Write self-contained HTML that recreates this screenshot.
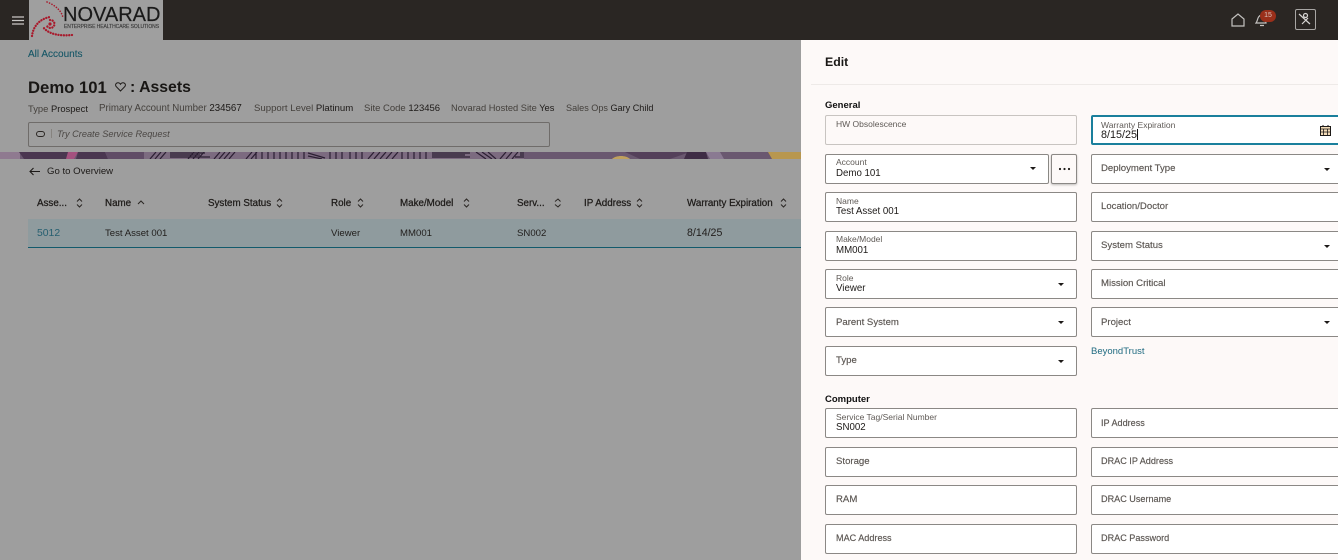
<!DOCTYPE html>
<html><head><meta charset="utf-8"><title>Assets</title>
<style>
*{box-sizing:border-box}
html,body{margin:0;padding:0}
body{width:1338px;height:560px;overflow:hidden;position:relative;background:#9e9e9e;font-family:"Liberation Sans",sans-serif;color:#1d1a18}
.a{position:absolute;white-space:nowrap}
.t{font-size:10px;line-height:12px}
.g{color:#44403c}
.th{font-size:9.8px;color:#1e1b19;top:198px;line-height:12px;-webkit-text-stroke:.25px #1e1b19}
.td{font-size:9.6px;color:#211e1c;top:228px;line-height:12px}
.f{position:absolute;height:30px;background:#fff;border:1px solid #8b8885;border-radius:2px;overflow:hidden}
.f .l{position:absolute;left:10px;top:3px;font-size:8.5px;line-height:10px;color:#5f5a56;white-space:nowrap}
.f .v{position:absolute;left:10px;top:13px;font-size:9.7px;line-height:11px;color:#1d1a18;white-space:nowrap}
.f .p{position:absolute;left:10px;top:8px;font-size:9.6px;line-height:12px;color:#5a5551;white-space:nowrap;-webkit-text-stroke:.15px #5a5551}
.R .p{left:9px}
.f .n{font-size:9.1px;top:7px}
.f .c{position:absolute;top:13px;width:0;height:0;border-left:3px solid transparent;border-right:3px solid transparent;border-top:3px solid #1d1a18}
.L{left:825px;width:252px}
.R{left:1091px;width:260px}
</style></head><body>
<div class="a" style="left:0;top:0;width:1338px;height:40px;background:#2a2623"></div>
<svg class="a" style="left:12px;top:16px" width="12" height="9"><path d="M0 1H12M0 4.5H12M0 8H12" stroke="#c9c7c5" stroke-width="1.2"/></svg>
<div class="a" style="left:29px;top:0;width:134px;height:40px;background:#9f9f9f;overflow:hidden">
<svg width="46" height="40" style="position:absolute;left:0;top:0"><g fill="none" stroke="#a81a2c" stroke-linecap="round" stroke-dasharray=".1 2.6"><path stroke-width="1.6" d="M18 2C26 5 33 11 34 18"/><path stroke-width="2.3" d="M3 36C4 27 10 19 21 17"/><path stroke-width="2.3" d="M43 35C32 36 20 35 14 27"/><path stroke-width="2.3" d="M21 20a4 4 0 1 1 -3 6"/></g><circle cx="21" cy="24" r="1.6" fill="#a81a2c"/></svg>
<div class="a" style="left:34px;top:4px;font-size:20px;line-height:22px;color:#1a1a1a;-webkit-text-stroke:.2px #1a1a1a">NOVARAD</div>
<div class="a" style="left:35px;top:24px;font-size:5px;line-height:6px;color:#333;letter-spacing:-.06px;-webkit-text-stroke:.15px #444">ENTERPRISE HEALTHCARE SOLUTIONS</div>
</div>
<div class="a t" style="left:28px;top:48px;color:#155666;font-size:10px;line-height:13px;-webkit-text-stroke:.1px #155666">All Accounts</div>
<div class="a" style="left:28px;top:78px;font-size:16.7px;line-height:20px;font-weight:700;color:#191715">Demo 101</div>
<svg class="a" style="left:115px;top:82px" width="11" height="10" viewBox="0 0 11 10"><path d="M5.5 9L1.2 4.6C-.2 2.6 1.2.7 3 .7 4.2.7 5 1.3 5.5 2.2 6 1.3 6.8.7 8 .7c1.8 0 3.2 1.9 1.8 3.9Z" fill="none" stroke="#1f1c1a"/></svg>
<div class="a" style="left:130px;top:78px;font-size:15.8px;line-height:20px;font-weight:700;color:#191715">: Assets</div>
<div class="a t g" style="left:28px;top:102px;font-size:9.4px;line-height:13px">Type <span style="color:#1d1a18">Prospect</span></div>
<div class="a t g" style="left:99px;top:102px;font-size:9.7px;line-height:13px">Primary Account Number <span style="color:#1d1a18">234567</span></div>
<div class="a t g" style="left:254px;top:102px;font-size:9.6px;line-height:13px">Support Level <span style="color:#1d1a18">Platinum</span></div>
<div class="a t g" style="left:364px;top:102px;font-size:9.5px;line-height:13px">Site Code <span style="color:#1d1a18">123456</span></div>
<div class="a t g" style="left:451px;top:102px;font-size:9.3px;line-height:13px">Novarad Hosted Site <span style="color:#1d1a18">Yes</span></div>
<div class="a t g" style="left:566px;top:102px;font-size:9.1px;line-height:13px">Sales Ops <span style="color:#1d1a18">Gary Child</span></div>
<div class="a" style="left:28px;top:122px;width:522px;height:25px;border:1px solid #6f6c6a;border-radius:2px"></div>
<div class="a" style="left:36px;top:131px;width:9px;height:6px;border:1.3px solid #2a2623;border-radius:3px"></div>
<div class="a" style="left:51px;top:129px;width:1px;height:9px;background:#86837f"></div>
<div class="a" style="left:57px;top:128px;font-size:9.2px;line-height:13px;font-style:italic;color:#4b4744">Try Create Service Request</div>
<svg class="a" style="left:0;top:152px" width="801" height="7" viewBox="0 0 801 7">
<rect width="801" height="7" fill="#6a5870"/>
<rect width="20" height="7" fill="#8f7a90"/>
<path d="M19 0H68L74 7H24Z" fill="#4a3650"/><path d="M68 0H78L74 7H66Z" fill="#a4517f"/><path d="M78 0H105L108 7H76Z" fill="#4a3650"/>
<path d="M105 0H144V7H108Z" fill="#604c66"/>
<rect x="144" width="200" height="7" fill="#7c6b80"/>
<path d="M150 7L156 0M155 7L161 0M160 7L166 0M170 1H205M170 3H200M170 5H210M188 7L194 0M193 7L199 0M198 7L204 0M214 7L220 0M219 7L225 0M224 7L230 0M229 7L235 0M246 7L252 0M251 7L257 0M256 7V0M262 7V0M268 7V0M274 7V0M280 7V0M286 7V0M292 7V0M298 7V0M304 7V0M308 1L325 6M308 4L322 7M330 7V0M336 7V0M342 7V0" stroke="#2b1f32" stroke-width="1.2" fill="none"/>
<rect x="344" width="180" height="7" fill="#7c6b80"/>
<path d="M350 7V0M356 7V0M362 7V0M368 7L374 0M374 7L380 0M380 7L386 0M386 7L392 0M392 7L398 0M402 7V0M408 7V0M414 7V0M420 7V0M426 7V0M432 1H470M432 3H465M432 5H470M476 0L486 7M482 0L492 7M488 0L496 7M500 7L506 0M506 7L512 0M512 7L518 0M520 1H524M520 3H524M515 5H524" stroke="#2b1f32" stroke-width="1.2" fill="none"/>
<path d="M625 0H690L670 7H640Z" fill="#54405a"/>
<path d="M612 7C616 3 626 3 630 7Z" fill="#c0a15d"/>
<path d="M687 0H706L708 7H684Z" fill="#3e2c45"/>
<path d="M706 0H720L724 7H710Z" fill="#8a7a92"/>
<path d="M768 0H801V7H772Z" fill="#b8974f"/>
</svg>
<svg class="a" style="left:29px;top:167px" width="12" height="9"><path d="M11 4.5H1M4.5 1L1 4.5L4.5 8" fill="none" stroke="#1d1a18" stroke-width="1.1"/></svg>
<div class="a t" style="left:47px;top:165px;font-size:9.6px;line-height:13px;color:#1d1a18">Go to Overview</div>

<div class="a th" style="left:37px">Asse...</div>
<div class="a th" style="left:105px">Name</div>
<div class="a th" style="left:208px">System Status</div>
<div class="a th" style="left:331px">Role</div>
<div class="a th" style="left:400px">Make/Model</div>
<div class="a th" style="left:517px">Serv...</div>
<div class="a th" style="left:584px">IP Address</div>
<div class="a th" style="left:687px">Warranty Expiration</div>
<svg class="a" style="left:0;top:198px" width="801" height="10" fill="none" stroke="#2a2623" stroke-width="1">
<path d="M77 3.5L79.5 1L82 3.5M77 6.5L79.5 9L82 6.5"/>
<path d="M138 6L141 3L144 6"/>
<path d="M277 3.5L279.5 1L282 3.5M277 6.5L279.5 9L282 6.5"/>
<path d="M358 3.5L360.5 1L363 3.5M358 6.5L360.5 9L363 6.5"/>
<path d="M464 3.5L466.5 1L469 3.5M464 6.5L466.5 9L469 6.5"/>
<path d="M555 3.5L558 1L560.5 3.5M555 6.5L558 9L560.5 6.5"/>
<path d="M637 3.5L639.5 1L642 3.5M637 6.5L639.5 9L642 6.5"/>
<path d="M781 3.5L783.5 1L786 3.5M781 6.5L783.5 9L786 6.5"/>
</svg>
<div class="a" style="left:28px;top:219px;width:773px;height:29px;background:#8f9b9e;border-bottom:1px solid #125a6c"></div>
<div class="a td" style="left:37px;color:#265f70;font-size:10.4px">5012</div>
<div class="a td" style="left:105px">Test Asset 001</div>
<div class="a td" style="left:331px">Viewer</div>
<div class="a td" style="left:400px">MM001</div>
<div class="a td" style="left:517px">SN002</div>
<div class="a td" style="left:687px;top:227px;font-size:10.6px">8/14/25</div>

<div class="a" style="left:801px;top:40px;width:537px;height:520px;background:#fdf9f8"></div>
<div class="a" style="left:811px;top:84px;width:527px;height:1px;background:#eeeae8"></div>
<div class="a" style="left:825px;top:55px;font-size:12.3px;line-height:15px;font-weight:700;color:#191715">Edit</div>
<div class="a" style="left:825px;top:100px;font-size:9.5px;line-height:12px;font-weight:700;color:#111">General</div>

<div class="f L" style="top:115px;background:#fdf9f8;border-color:#c8c4c1"><span class="l">HW Obsolescence</span></div>
<div class="f R" style="top:115px;border:2px solid #1a7f9c"><span class="l" style="left:8px;top:3px">Warranty Expiration</span><span class="v" style="left:8px;top:12px;font-size:10.8px">8/15/25<span style="display:inline-block;width:1px;height:11px;background:#111;vertical-align:-2px"></span></span>
<svg style="position:absolute;left:227px;top:8px" width="12" height="11" viewBox="0 0 12 11"><rect x=".5" y="1.5" width="10" height="9" fill="#f4dcb8" stroke="#1d1a18"/><path d="M.5 4H10.5M.5 7H10.5M3.5 4V10M7.5 4V10" stroke="#1d1a18" stroke-width=".8"/><path d="M3 0V2M8 0V2" stroke="#1d1a18"/></svg></div>

<div class="f" style="left:825px;width:224px;top:154px"><span class="l" style="top:2px">Account</span><span class="v">Demo 101</span><i class="c" style="left:204px;top:12px"></i></div>
<div class="f" style="left:1051px;width:26px;top:154px;background:#fdf9f8;box-shadow:0 1px 2px rgba(0,0,0,.25)"><svg style="position:absolute;left:6px;top:12px" width="13" height="4"><circle cx="2" cy="2" r="1.1" fill="#1d1a18"/><circle cx="6.5" cy="2" r="1.1" fill="#1d1a18"/><circle cx="11" cy="2" r="1.1" fill="#1d1a18"/></svg></div>
<div class="f R" style="top:154px"><span class="p">Deployment Type</span><i class="c" style="left:232px"></i></div>
<div class="f L" style="top:192px"><span class="l">Name</span><span class="v">Test Asset 001</span></div>
<div class="f R" style="top:192px"><span class="p">Location/Doctor</span></div>
<div class="f L" style="top:231px"><span class="l" style="top:2px">Make/Model</span><span class="v">MM001</span></div>
<div class="f R" style="top:231px"><span class="p">System Status</span><i class="c" style="left:232px"></i></div>
<div class="f L" style="top:269px"><span class="l">Role</span><span class="v">Viewer</span><i class="c" style="left:232px"></i></div>
<div class="f R" style="top:269px"><span class="p">Mission Critical</span></div>
<div class="f L" style="top:307px"><span class="p" style="top:9px">Parent System</span><i class="c" style="left:232px"></i></div>
<div class="f R" style="top:307px"><span class="p" style="top:9px">Project</span><i class="c" style="left:232px"></i></div>
<div class="f L" style="top:346px"><span class="p" style="top:8px">Type</span><i class="c" style="left:232px"></i></div>
<div class="a" style="left:1091px;top:345px;font-size:9.5px;line-height:13px;color:#1f6a80">BeyondTrust</div>

<div class="a" style="left:825px;top:393px;font-size:9.5px;line-height:13px;font-weight:700;color:#111">Computer</div>
<div class="f L" style="top:408px"><span class="l">Service Tag/Serial Number</span><span class="v">SN002</span></div>
<div class="f R" style="top:408px"><span class="p n" style="top:8px">IP Address</span></div>
<div class="f L" style="top:447px"><span class="p">Storage</span></div>
<div class="f R" style="top:447px"><span class="p n">DRAC IP Address</span></div>
<div class="f L" style="top:485px"><span class="p">RAM</span></div>
<div class="f R" style="top:485px"><span class="p n">DRAC Username</span></div>
<div class="f L" style="top:524px"><span class="p n">MAC Address</span></div>
<div class="f R" style="top:524px"><span class="p n">DRAC Password</span></div>

<svg class="a" style="left:1231px;top:13px" width="14" height="14" viewBox="0 0 14 14"><path d="M1 6L7 1L13 6V13H1Z" fill="none" stroke="#c4c2c0" stroke-width="1.2"/></svg>
<svg class="a" style="left:1255px;top:13px" width="14" height="14" viewBox="0 0 14 14"><path d="M1 10C3 8 2 3 6.5 2 10 2 10.5 6 11 10ZM5 12.5H9" fill="none" stroke="#c4c2c0" stroke-width="1.2"/></svg>
<div class="a" style="left:1260px;top:10px;width:16px;height:12px;background:#9a2f1a;border-radius:6px;color:#d8c4be;font-size:7px;line-height:12px;text-align:center">15</div>
<svg class="a" style="left:1295px;top:9px" width="21" height="21" viewBox="0 0 21 21"><rect x=".5" y=".5" width="20" height="20" rx="1.5" fill="none" stroke="#a8a6a4"/><circle cx="10.5" cy="6.5" r="2" fill="none" stroke="#d8d6d4" stroke-width="1.2"/><path d="M4 5L15 15M13 9L7 15" fill="none" stroke="#d8d6d4" stroke-width="1.2"/></svg>
</body></html>
